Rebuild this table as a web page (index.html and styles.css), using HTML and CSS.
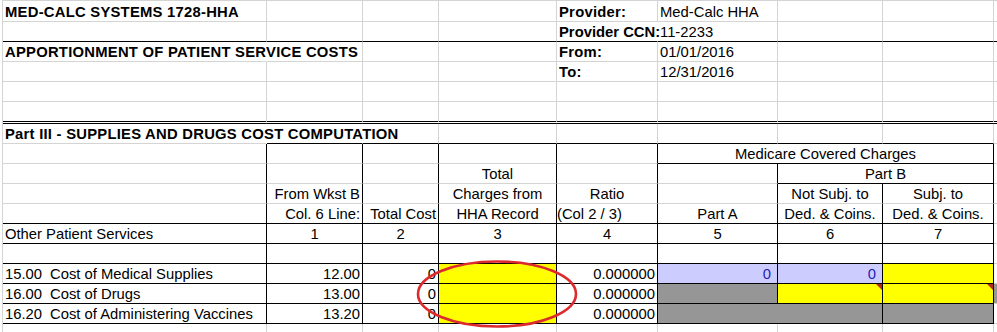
FILE: index.html
```html
<!DOCTYPE html>
<html>
<head>
<meta charset="utf-8">
<link rel="stylesheet" href="styles.css">
</head>
<body>
<div class="sheet">
  <div class="grid">
    <!-- R1 -->
    <div class="c b">MED-CALC SYSTEMS 1728-HHA</div>
    <div class="c"></div><div class="c"></div><div class="c"></div>
    <div class="c b">Provider:</div>
    <div class="c">Med-Calc HHA</div>
    <div class="c"></div><div class="c"></div><div class="c"></div>
    <!-- R2 -->
    <div class="c bb"></div><div class="c bb"></div><div class="c bb"></div><div class="c bb"></div>
    <div class="c b bb nr tight">Provider CCN:</div>
    <div class="c bb">11-2233</div>
    <div class="c bb"></div><div class="c bb"></div><div class="c bb"></div>
    <!-- R3 -->
    <div class="c b nr">APPORTIONMENT OF PATIENT SERVICE COSTS</div>
    <div class="c"></div><div class="c"></div><div class="c"></div>
    <div class="c b">From:</div>
    <div class="c">01/01/2016</div>
    <div class="c"></div><div class="c"></div><div class="c"></div>
    <!-- R4 -->
    <div class="c"></div><div class="c"></div><div class="c"></div><div class="c"></div>
    <div class="c b">To:</div>
    <div class="c">12/31/2016</div>
    <div class="c"></div><div class="c"></div><div class="c"></div>
    <!-- R5 -->
    <div class="c"></div><div class="c"></div><div class="c"></div><div class="c"></div><div class="c"></div><div class="c"></div><div class="c"></div><div class="c"></div><div class="c"></div>
    <!-- R6 -->
    <div class="c dbl"></div><div class="c dbl"></div><div class="c dbl"></div><div class="c dbl"></div><div class="c dbl"></div><div class="c dbl"></div><div class="c dbl"></div><div class="c dbl"></div><div class="c dbl"></div>
    <!-- R7 -->
    <div class="c b nr">Part III - SUPPLIES AND DRUGS COST COMPUTATION</div>
    <div class="c bb nr"></div>
    <div class="c bb"></div><div class="c bb"></div><div class="c bb"></div><div class="c bb"></div><div class="c bb"></div><div class="c bb"></div>
    <div class="c"></div>
    <!-- R8 -->
    <div class="c br"></div><div class="c br"></div><div class="c br"></div><div class="c br"></div><div class="c br"></div>
    <div class="c br bb ctr s3">Medicare Covered Charges</div>
    <div class="c"></div>
    <!-- R9 -->
    <div class="c br"></div><div class="c br"></div><div class="c br"></div>
    <div class="c br ctr">Total</div>
    <div class="c br"></div>
    <div class="c br"></div>
    <div class="c br bb ctr s2">Part B</div>
    <div class="c"></div>
    <!-- R10 -->
    <div class="c br"></div>
    <div class="c br rt">From Wkst B</div>
    <div class="c br"></div>
    <div class="c br ctr">Charges from</div>
    <div class="c br ctr">Ratio</div>
    <div class="c br"></div>
    <div class="c br ctr">Not Subj. to</div>
    <div class="c br ctr">Subj. to</div>
    <div class="c"></div>
    <!-- R11 -->
    <div class="c br bb"></div>
    <div class="c br bb rt">Col. 6 Line:</div>
    <div class="c br bb rt">Total Cost</div>
    <div class="c br bb ctr">HHA Record</div>
    <div class="c br bb lft">(Col 2 / 3)</div>
    <div class="c br bb ctr">Part A</div>
    <div class="c br bb ctr">Ded. &amp; Coins.</div>
    <div class="c br bb ctr">Ded. &amp; Coins.</div>
    <div class="c"></div>
    <!-- R12 -->
    <div class="c br bb">Other Patient Services</div>
    <div class="c br bb ctr">1</div>
    <div class="c br bb ctr">2</div>
    <div class="c br bb ctr">3</div>
    <div class="c br bb ctr">4</div>
    <div class="c br bb ctr">5</div>
    <div class="c br bb ctr">6</div>
    <div class="c br bb ctr">7</div>
    <div class="c"></div>
    <!-- R13 -->
    <div class="c br bb"></div><div class="c br bb"></div><div class="c br bb"></div><div class="c br bb"></div><div class="c br bb"></div><div class="c br bb"></div><div class="c br bb"></div><div class="c br bb"></div>
    <div class="c"></div>
    <!-- R14 -->
    <div class="c br bb"><span class="ln">15.00</span>Cost of Medical Supplies</div>
    <div class="c br bb rt">12.00</div>
    <div class="c br bb rt">0</div>
    <div class="c br bb yel"></div>
    <div class="c br bb rt">0.000000</div>
    <div class="c br bb rt lav">0</div>
    <div class="c br bb rt lav">0</div>
    <div class="c br bb yel"></div>
    <div class="c"></div>
    <!-- R15 -->
    <div class="c br bb"><span class="ln">16.00</span>Cost of Drugs</div>
    <div class="c br bb rt">13.00</div>
    <div class="c br bb rt">0</div>
    <div class="c br bb yel"></div>
    <div class="c br bb rt">0.000000</div>
    <div class="c br bb gry"></div>
    <div class="c br bb yel note"></div>
    <div class="c br bb yel note"></div>
    <div class="c gry"></div>
    <!-- R16 -->
    <div class="c br bb"><span class="ln">16.20</span>Cost of Administering Vaccines</div>
    <div class="c br bb rt">13.20</div>
    <div class="c br bb rt">0</div>
    <div class="c br bb yel"></div>
    <div class="c br bb rt">0.000000</div>
    <div class="c br bb gry s2"></div>
    <div class="c br bb gry"></div>
    <div class="c"></div>
    <!-- R17 -->
    <div class="c"></div><div class="c"></div><div class="c"></div><div class="c"></div><div class="c"></div><div class="c"></div><div class="c"></div><div class="c"></div><div class="c"></div>
  </div>
  <svg class="circle" width="170" height="72" viewBox="0 0 170 72">
    <ellipse cx="81" cy="34" rx="79" ry="32.5" fill="none" stroke="#dc2a2e" stroke-width="2.6"/>
  </svg>
</div>
</body>
</html>
```
FILE: styles.css
```css
html, body {
  margin: 0;
  padding: 0;
  background: #ffffff;
  overflow: hidden;
}
.sheet {
  position: relative;
  width: 997px;
  height: 332px;
  overflow: hidden;
}
.grid {
  display: grid;
  margin-left: 2px;
  border-left: 1px solid #d4d4d4;
  border-top: 1px solid #d4d4d4;
  grid-template-columns: 264px 96px 76px 118px 101px 120px 105px 111px 60px;
  grid-template-rows: 21px 20px 20px 20px 20px 22px repeat(11, 20px);
  font-family: "Liberation Sans", Arial, sans-serif;
  font-size: 14.8px;
  color: #000;
}
.c {
  box-sizing: border-box;
  border-right: 1px solid #d4d4d4;
  border-bottom: 1px solid #d4d4d4;
  display: flex;
  align-items: flex-end;
  padding: 0 2px 1px 2px;
  line-height: 16px;
  white-space: pre;
  overflow: visible;
  position: relative;
}
.b { font-weight: bold; letter-spacing: 0.25px; }
.tight { letter-spacing: 0; }
.bb { border-bottom-color: #000; }
.br { border-right-color: #000; }
.nr { border-right-color: transparent; }
.dbl { border-bottom: 3px double #000; }
.s2 { grid-column: span 2; }
.s3 { grid-column: span 3; }
.ctr { justify-content: center; }
.rt { justify-content: flex-end; }
.lft { justify-content: flex-start; padding-left: 0; }
.ln { display: inline-block; width: 45px; }
.yel { background: #ffff00; }
.lav { background: #ccccff; color: #2222b8; padding-right: 6px; }
.gry { background: #969696; }
.note::after {
  content: "";
  position: absolute;
  top: 0;
  right: 0;
  border-top: 6px solid #b8281e;
  border-left: 6px solid transparent;
}
.circle {
  position: absolute;
  left: 416px;
  top: 260px;
}
```
